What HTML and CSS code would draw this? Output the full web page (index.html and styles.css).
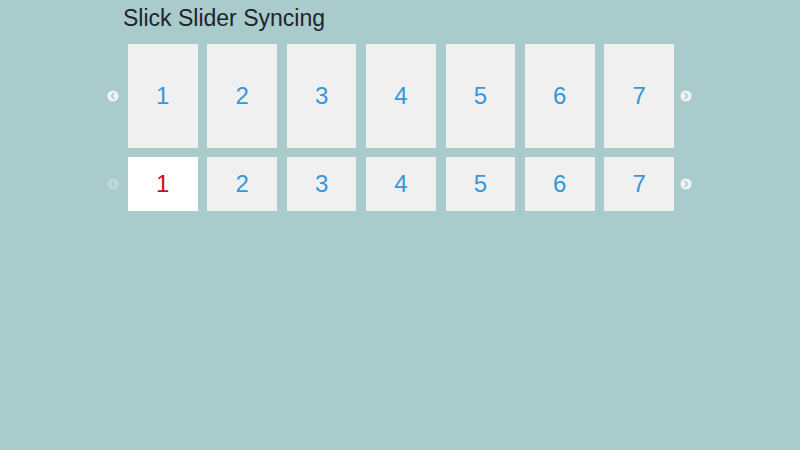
FILE: index.html
```html
<!DOCTYPE html>
<html lang="en">
<head>
<meta charset="utf-8">
<title>Slick Slider Syncing</title>
<link rel="stylesheet" href="styles.css">
</head>
<body>
<div class="page">
  <h1 class="title">Slick Slider Syncing</h1>

  <div class="slider slider-for">
    <button class="arrow arrow-prev" aria-label="Previous">
      <svg viewBox="0 0 12 12" width="12" height="12"><circle cx="6" cy="6" r="5.6" fill="#fff"/><path d="M7 3.4 L4.4 6 L7 8.6" fill="none" stroke="#aacbcc" stroke-width="1.6" stroke-linecap="round" stroke-linejoin="round"/></svg>
    </button>
    <div class="track">
      <div class="slide"><span>1</span></div>
      <div class="slide"><span>2</span></div>
      <div class="slide"><span>3</span></div>
      <div class="slide"><span>4</span></div>
      <div class="slide"><span>5</span></div>
      <div class="slide"><span>6</span></div>
      <div class="slide"><span>7</span></div>
    </div>
    <button class="arrow arrow-next" aria-label="Next">
      <svg viewBox="0 0 12 12" width="12" height="12"><circle cx="6" cy="6" r="5.6" fill="#fff"/><path d="M5 3.4 L7.6 6 L5 8.6" fill="none" stroke="#aacbcc" stroke-width="1.6" stroke-linecap="round" stroke-linejoin="round"/></svg>
    </button>
  </div>

  <div class="slider slider-nav">
    <button class="arrow arrow-prev is-disabled" aria-label="Previous">
      <svg viewBox="0 0 12 12" width="12" height="12"><circle cx="6" cy="6" r="5.6" fill="#fff"/><path d="M7 3.4 L4.4 6 L7 8.6" fill="none" stroke="#aacbcc" stroke-width="1.6" stroke-linecap="round" stroke-linejoin="round"/></svg>
    </button>
    <div class="track">
      <div class="slide is-current"><span>1</span></div>
      <div class="slide"><span>2</span></div>
      <div class="slide"><span>3</span></div>
      <div class="slide"><span>4</span></div>
      <div class="slide"><span>5</span></div>
      <div class="slide"><span>6</span></div>
      <div class="slide"><span>7</span></div>
    </div>
    <button class="arrow arrow-next" aria-label="Next">
      <svg viewBox="0 0 12 12" width="12" height="12"><circle cx="6" cy="6" r="5.6" fill="#fff"/><path d="M5 3.4 L7.6 6 L5 8.6" fill="none" stroke="#aacbcc" stroke-width="1.6" stroke-linecap="round" stroke-linejoin="round"/></svg>
    </button>
  </div>
</div>
</body>
</html>
```

FILE: styles.css
```css
html, body {
  margin: 0;
  padding: 0;
}

body {
  background: #aacbcc;
  font-family: "Liberation Sans", Arial, sans-serif;
  min-height: 450px;
}

.page {
  width: 600px;
  margin-left: 98px;
  padding-top: 4px;
}

.title {
  margin: 0 0 12px 25px;
  font-size: 23px;
  font-weight: normal;
  line-height: 28px;
  color: #1d2528;
}

.slider {
  display: flex;
  align-items: center;
}

.slider-nav {
  margin-top: 9px;
}

.track {
  display: flex;
  gap: 9.9px;
  width: 546px;
}

.slide {
  flex: 1 1 0;
  display: flex;
  align-items: center;
  justify-content: center;
  background: #f0f0f0;
  color: #3498db;
  font-size: 24px;
}

.slider-for .slide {
  height: 104px;
}

.slider-nav .slide {
  height: 54px;
}

.slide.is-current {
  background: #ffffff;
  color: #c8101a;
}

.arrow {
  display: flex;
  align-items: center;
  justify-content: center;
  padding: 0;
  border: 0;
  background: none;
  opacity: 0.8;
}

.arrow svg {
  display: block;
}

.arrow-prev {
  width: 30px;
}

.arrow-next {
  width: 24px;
}

.arrow.is-disabled {
  opacity: 0.25;
}
```
